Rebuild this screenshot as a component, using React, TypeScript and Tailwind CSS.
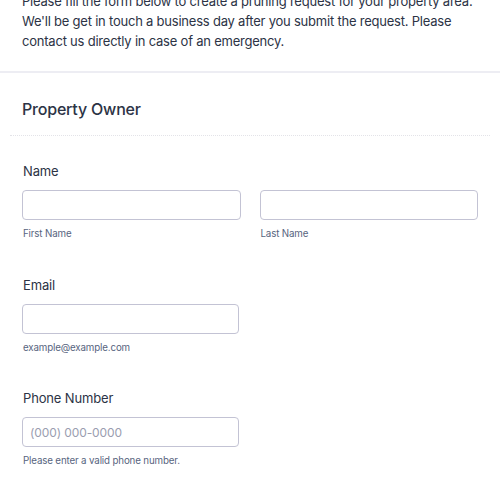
import React from "react";

function Field({
  label,
  children,
}: {
  label: string;
  children: React.ReactNode;
}) {
  return (
    <div className="flex flex-col px-[12px]">
      <div className="pl-[1px] text-[13px] leading-[20px] font-normal tracking-[-0.15px] text-[#2c3345]">{label}</div>
      <div className="mt-[9px]">{children}</div>
    </div>
  );
}

function Input({ placeholder }: { placeholder?: string }) {
  return (
    <input
      placeholder={placeholder}
      className="block w-full h-[30px] rounded-[4px] border border-[#c3c3d4] bg-white px-[7px] text-[12px] tracking-[-0.1px] text-[#2c3345] placeholder:text-[#9a9db0] outline-none"
    />
  );
}

function Sub({ children }: { children: React.ReactNode }) {
  return (
    <div className="mt-[6px] pl-[1px] text-[9.75px] leading-[16px] tracking-[-0.15px] text-[#57647e]">{children}</div>
  );
}

export default function App() {
  return (
    <div
      className="w-[500px] h-[484px] overflow-hidden bg-white"
      style={{ fontFamily: "Inter, 'Noto Sans', sans-serif" }}
    >
      <p className="-mt-[9px] px-[22px] text-[13px] leading-[20px] tracking-[-0.22px] text-[#2c3345] whitespace-nowrap">
        Please fill the form below to create a pruning request for your property area.
        <br />
        We'll be get in touch a business day after you submit the request. Please
        <br />
        contact us directly in case of an emergency.
      </p>
      <div className="mt-[20px] h-[2px] bg-[#ededf3]" />
      <div className="px-[10px]">
        <div className="pt-[24px] pb-[14px] px-[12px] border-b border-dotted border-[#e3e3e8]">
          <h2 className="text-[16px] leading-[24px] font-medium tracking-[-0.2px] text-[#2c3345]">Property Owner</h2>
        </div>
        <div className="pt-[25px] flex flex-col gap-[32.5px]">
          <Field label="Name">
            <div className="grid grid-cols-2 gap-[19px]">
              <div>
                <Input />
                <Sub>First Name</Sub>
              </div>
              <div>
                <Input />
                <Sub>Last Name</Sub>
              </div>
            </div>
          </Field>
          <Field label="Email">
            <div className="w-[217px]">
              <Input />
              <Sub>example@example.com</Sub>
            </div>
          </Field>
          <Field label="Phone Number">
            <div className="w-[217px]">
              <Input placeholder="(000) 000-0000" />
              <Sub>Please enter a valid phone number.</Sub>
            </div>
          </Field>
        </div>
      </div>
    </div>
  );
}
